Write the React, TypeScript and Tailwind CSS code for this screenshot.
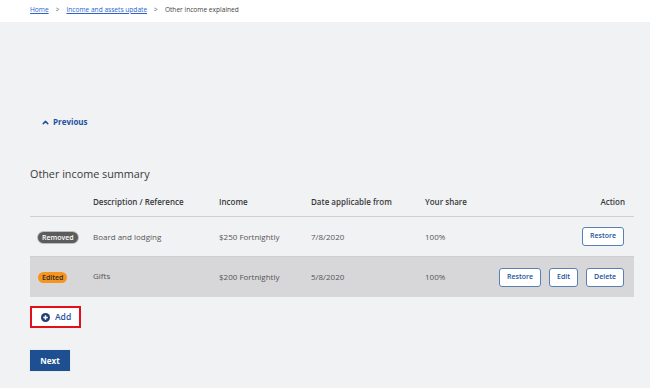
import { ChevronUp } from "lucide-react";

type Row = {
    status: "Removed" | "Edited";
    description: string;
    income: string;
    date: string;
    share: string;
    actions: string[];
};

const rows: Row[] = [
    { status: "Removed", description: "Board and lodging", income: "$250 Fortnightly", date: "7/8/2020", share: "100%", actions: ["Restore"] },
    { status: "Edited", description: "Gifts", income: "$200 Fortnightly", date: "5/8/2020", share: "100%", actions: ["Restore", "Edit", "Delete"] },
];

const cols = "grid grid-cols-[63px_126px_92px_114px_1fr_auto] items-center";

const Badge = ({ status }: { status: Row["status"] }) =>
    status === "Removed" ? (
        <span className="ml-2 inline-block rounded-full bg-[#5c5c5c] px-[4px] text-[7px] font-semibold leading-[11px] text-white ring-1 ring-[#bdbdbd]">
            Removed
        </span>
    ) : (
        <span className="ml-2 inline-block rounded-full bg-[#f7941d] px-[4px] text-[7px] font-semibold leading-[11px] text-[#2a2a2a]">
            Edited
        </span>
    );

export default function App() {
    return (
        <div className="h-[388px] w-[650px] overflow-hidden bg-[#f1f2f4] font-['Open_Sans',sans-serif] text-[#3a3a3a]">
            <div className="flex h-[22px] items-center gap-[7px] bg-white pl-[30px] pb-[3px] text-[6.6px]">
                <a className="text-[#2b64c9] underline">Home</a>
                <span className="text-[#555]">&gt;</span>
                <a className="text-[#2b64c9] underline">Income and assets update</a>
                <span className="text-[#555]">&gt;</span>
                <span className="text-[#444]">Other income explained</span>
            </div>

            <div className="px-[30px]">
                <div className="mt-[94px] flex h-[12px] items-center gap-[3px] pl-[11px] text-[8px] font-bold text-[#2451a0]">
                    <ChevronUp size={9} strokeWidth={4} />
                    <span>Previous</span>
                </div>

                <h2 className="mt-[38px] text-[10.8px] leading-[16px] text-[#3a3a3a]">Other income summary</h2>

                <div className="mt-[9px] w-[604px] text-[8px]">
                    <div className={`${cols} h-[26px] border-b border-[#cfcfd2] pb-[3px] font-semibold text-[#3a3a3a]`}>
                        <span />
                        <span>Description / Reference</span>
                        <span>Income</span>
                        <span>Date applicable from</span>
                        <span>Your share</span>
                        <span className="pr-[9px] text-right">Action</span>
                    </div>
                    {rows.map((r, i) => (
                        <div
                            key={r.description}
                            className={`${cols} h-[40px] ${i === 1 ? "bg-[#d7d7d9]" : ""} ${i === 0 ? "border-b border-[#cfcfd2]" : ""} text-[#555]`}
                        >
                            <span>
                                <Badge status={r.status} />
                            </span>
                            <span className={i === 1 ? "-mt-[2px]" : ""}>{r.description}</span>
                            <span>{r.income}</span>
                            <span>{r.date}</span>
                            <span>{r.share}</span>
                            <div className="flex justify-end gap-[8px] pr-[10px]">
                                {r.actions.map((a) => (
                                    <button
                                        key={a}
                                        className="h-[19px] rounded-[3px] border border-[#5a7fb5] bg-white px-[7px] text-[7px] font-semibold text-[#2451a0]"
                                    >
                                        {a}
                                    </button>
                                ))}
                            </div>
                        </div>
                    ))}
                </div>

                <button className="mt-[9px] flex h-[22px] w-[51px] items-center gap-[5px] border-2 border-[#e3101b] bg-white pl-[9px] text-[8.5px] font-semibold text-[#2451a0]">
                    <svg width="9" height="9" viewBox="0 0 16 16">
                        <circle cx="8" cy="8" r="8" fill="#1d3f7a" />
                        <path d="M8 4v8M4 8h8" stroke="white" strokeWidth="2.6" />
                    </svg>
                    Add
                </button>

                <button className="-ml-[1px] mt-[21px] h-[23px] w-[42px] border border-[#e8ecf3] bg-[#1d4f91] text-[8px] font-bold text-white">
                    Next
                </button>
            </div>
        </div>
    );
}
